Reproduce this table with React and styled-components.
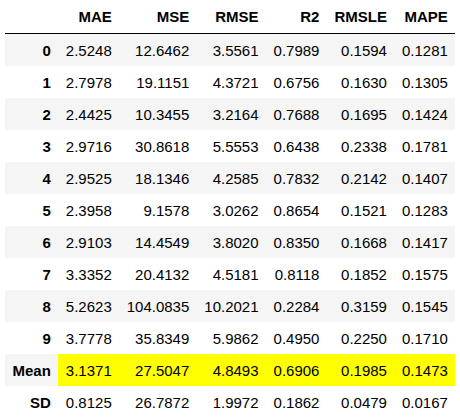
import React from "react";
import styled, { createGlobalStyle } from "styled-components";

const Global = createGlobalStyle`
  html, body { margin: 0; padding: 0; background: #fff; }
  body { font-family: "Liberation Sans", Arial, sans-serif; color: #000; }
`;

const Wrap = styled.div`
  padding: 0 5px;
`;

const Table = styled.table`
  border-collapse: collapse;
  border-spacing: 0;
  border: none;
  font-size: 15px;
  line-height: 17px;
  table-layout: auto;
`;

const HeadCell = styled.th`
  text-align: right;
  font-weight: bold;
  padding: 7.5px 7.5px 8.5px;
  border-bottom: 1px solid #000;
  white-space: nowrap;
`;

const Row = styled.tr`
  background: ${(p) => (p.$striped ? "#f5f5f5" : "#fff")};
`;

const IndexCell = styled.th`
  text-align: right;
  font-weight: bold;
  padding: 7.5px;
  white-space: nowrap;
`;

const Cell = styled.td`
  text-align: right;
  padding: 7.5px;
  white-space: nowrap;
  background: ${(p) => (p.$highlight ? "#ffff00" : "transparent")};
`;

const columns = ["MAE", "MSE", "RMSE", "R2", "RMSLE", "MAPE"];

const rows = [
  ["0", ["2.5248", "12.6462", "3.5561", "0.7989", "0.1594", "0.1281"]],
  ["1", ["2.7978", "19.1151", "4.3721", "0.6756", "0.1630", "0.1305"]],
  ["2", ["2.4425", "10.3455", "3.2164", "0.7688", "0.1695", "0.1424"]],
  ["3", ["2.9716", "30.8618", "5.5553", "0.6438", "0.2338", "0.1781"]],
  ["4", ["2.9525", "18.1346", "4.2585", "0.7832", "0.2142", "0.1407"]],
  ["5", ["2.3958", "9.1578", "3.0262", "0.8654", "0.1521", "0.1283"]],
  ["6", ["2.9103", "14.4549", "3.8020", "0.8350", "0.1668", "0.1417"]],
  ["7", ["3.3352", "20.4132", "4.5181", "0.8118", "0.1852", "0.1575"]],
  ["8", ["5.2623", "104.0835", "10.2021", "0.2284", "0.3159", "0.1545"]],
  ["9", ["3.7778", "35.8349", "5.9862", "0.4950", "0.2250", "0.1710"]],
  ["Mean", ["3.1371", "27.5047", "4.8493", "0.6906", "0.1985", "0.1473"]],
  ["SD", ["0.8125", "26.7872", "1.9972", "0.1862", "0.0479", "0.0167"]],
];

export default function App() {
  return (
    <>
      <Global />
      <Wrap>
        <Table>
          <thead>
            <tr>
              <HeadCell />
              {columns.map((c) => (
                <HeadCell key={c}>{c}</HeadCell>
              ))}
            </tr>
          </thead>
          <tbody>
            {rows.map(([label, vals], i) => (
              <Row key={label} $striped={i % 2 === 0}>
                <IndexCell>{label}</IndexCell>
                {vals.map((v, j) => (
                  <Cell key={j} $highlight={label === "Mean"}>
                    {v}
                  </Cell>
                ))}
              </Row>
            ))}
          </tbody>
        </Table>
      </Wrap>
    </>
  );
}
